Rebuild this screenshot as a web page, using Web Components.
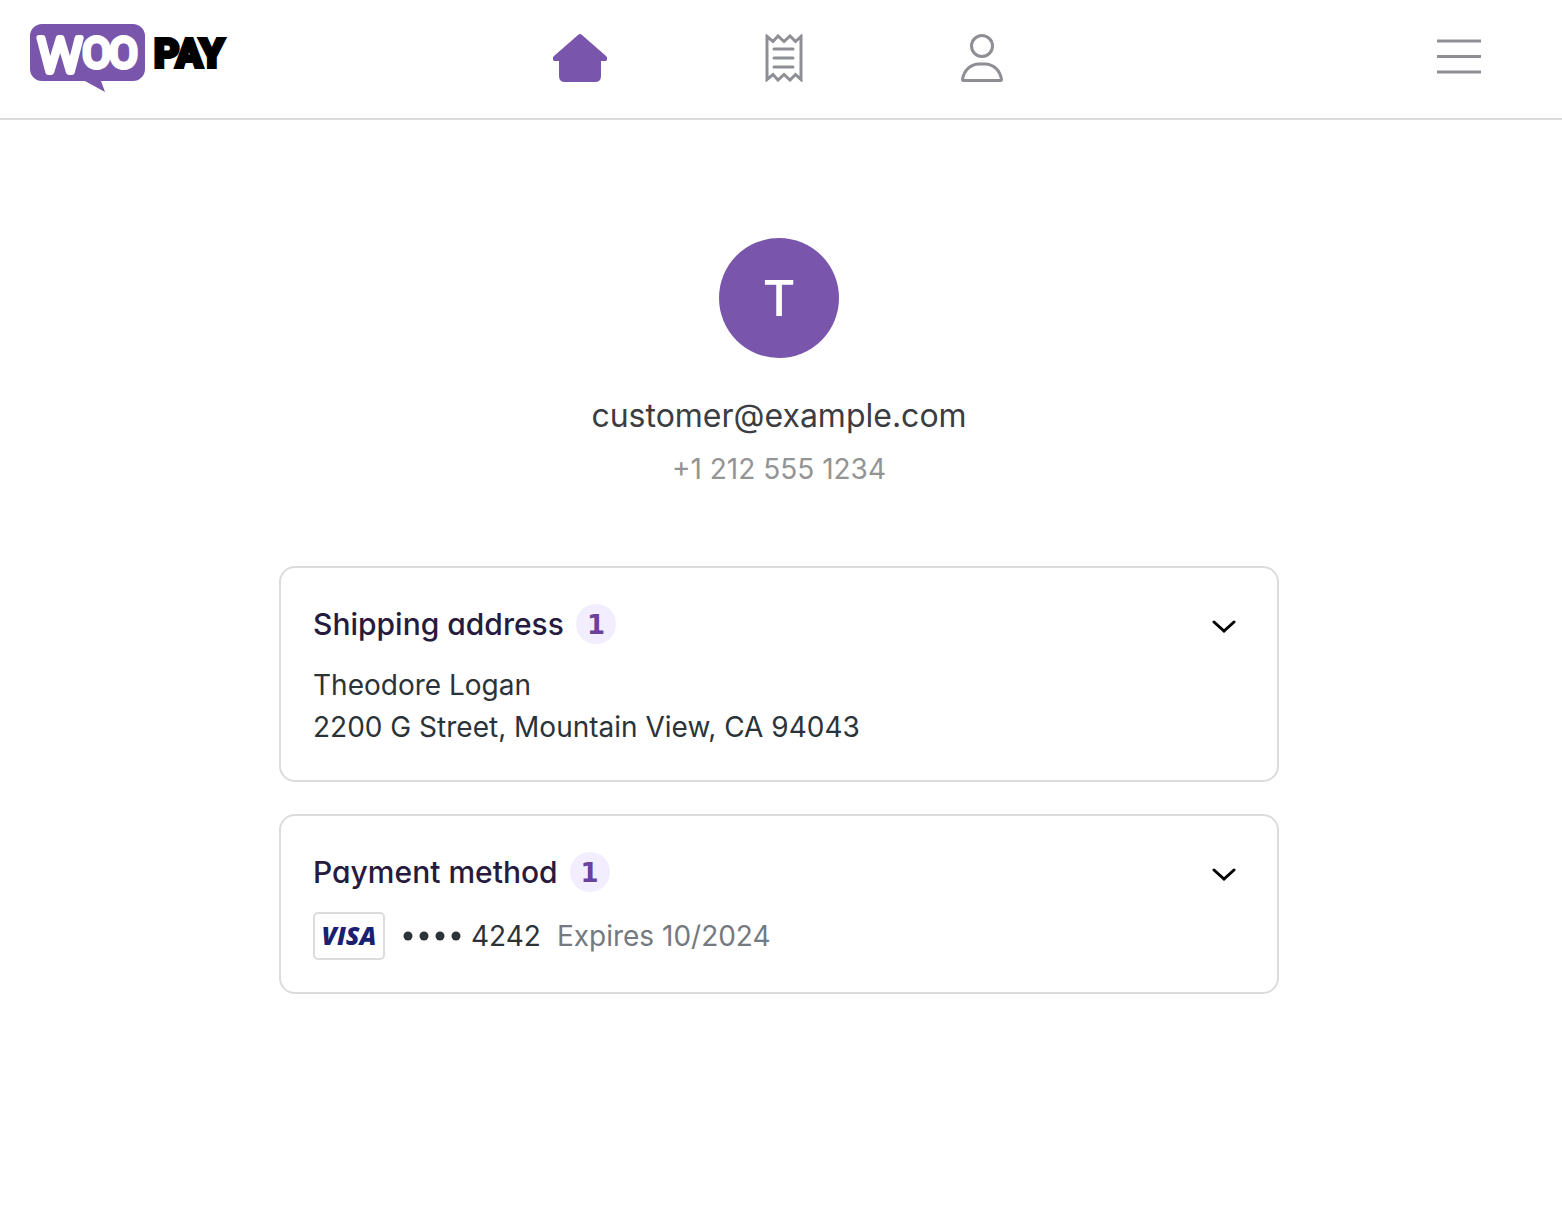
<!DOCTYPE html>
<html lang="en">
<head>
  <meta charset="utf-8">
  <meta name="viewport" content="width=device-width, initial-scale=1">
  <title>WooPay</title>
  <style>
    :root {
      --purple: #7956ab;
      --grey: #8e8f94;
      --border: #dcdcde;
    }

    body {
      margin: 0;
      background: #fff;
      color: #2c3338;
      font-family: Inter, "Liberation Sans", sans-serif;
      font-size: 28px;
      line-height: 42px;
      font-optical-sizing: none;
    }

    main {
      display: flex;
      flex-direction: column;
      gap: 32px;
      max-width: 1000px;
      margin: 0 auto;
      padding: 118px 32px 64px 28px;
    }
  </style>
</head>
<body>
  <woopay-header></woopay-header>
  <main>
    <customer-profile initial="T">
      <span slot="email">customer@example.com</span>
      <span slot="phone">+1 212 555 1234</span>
    </customer-profile>
    <account-card heading="Shipping address" count="1">
      <div>Theodore Logan</div>
      <div>2200 G Street, Mountain View, CA 94043</div>
    </account-card>
    <account-card heading="Payment method" count="1">
      <saved-card last4="4242" expires="10/2024"></saved-card>
    </account-card>
  </main>

  <script>
    class WooPayLogo extends HTMLElement {
      constructor() {
        super();
        this.attachShadow({ mode: 'open' });
      }

      connectedCallback() {
        this.shadowRoot.innerHTML = `
          <style>
            :host {
              display: block;
            }

            svg {
              display: block;
              overflow: visible;
            }

            text {
              font-family: Roboto, "Liberation Sans", sans-serif;
            }

            .woo {
              fill: #fff;
              stroke: #fff;
              stroke-width: 6;
              stroke-linejoin: round;
              font-weight: 300;
            }

            .pay {
              fill: #000;
              stroke: #000;
              stroke-width: 4;
              font-weight: 700;
            }
          </style>
          <svg width="200" height="68" viewBox="0 0 200 68" role="img" aria-label="WooPay">
            <path fill="#7956ab" d="M12 0h91a12 12 0 0 1 12 12v33a12 12 0 0 1-12 12H71l4 11-20-11H12A12 12 0 0 1 0 45V12A12 12 0 0 1 12 0z"/>
            <text class="woo" font-size="49" x="8" y="48">W</text>
            <text class="woo" font-size="40" x="53" y="43">OO</text>
            <text class="pay" font-size="39" x="124" y="43">PAY</text>
          </svg>
        `;
      }
    }

    class WooPayHeader extends HTMLElement {
      constructor() {
        super();
        this.attachShadow({ mode: 'open' });
      }

      connectedCallback() {
        this.shadowRoot.innerHTML = `
          <style>
            :host {
              display: block;
              border-bottom: 2px solid var(--border);
            }

            header {
              display: grid;
              grid-template-columns: 1fr auto 1fr;
              align-items: center;
              height: 118px;
              padding: 0 6px 2px 0;
              box-sizing: border-box;
            }

            .header__logo {
              justify-self: start;
              padding-left: 30px;
            }

            nav {
              display: flex;
              align-items: center;
              gap: 158px;
            }

            a, button {
              display: block;
              color: var(--grey);
            }

            a[aria-current] {
              color: var(--purple);
            }

            button {
              justify-self: end;
              margin: 0 75px 4px 0;
              padding: 0;
              border: 0;
              background: none;
              cursor: pointer;
            }

            svg {
              display: block;
              fill: none;
              stroke: currentColor;
              stroke-width: 3;
              stroke-linecap: round;
              stroke-linejoin: round;
            }
          </style>
          <header>
            <a class="header__logo" href="#"><woopay-logo></woopay-logo></a>
            <nav aria-label="Account">
              <a href="#home" aria-label="Home" aria-current="page">
                <svg width="54" height="48" viewBox="0 0 54 48">
                  <path fill="currentColor" stroke="none" d="M25 1q2-2 4 0l24 21q2 2 1 4-.5 1-2 1h-4v15q0 6-6 6H12q-6 0-6-6V27H2q-1.500 0-2-1-1-2 1-4z"/>
                </svg>
              </a>
              <a href="#orders" aria-label="Orders">
                <svg width="38" height="48" viewBox="0 0 38 48">
                  <path stroke-linecap="butt" stroke-linejoin="miter" d="M2 2.500L8 7.500l5-5.500 6 5.500L25 2l5.500 5.500L36 2.500v43l-5.500-5L25 46l-6-5.500-6 5.500-5-5.500-6 5z"/>
                  <path d="M9 15h19M9 24h19M9 33h19"/>
                </svg>
              </a>
              <a href="#profile" aria-label="Profile">
                <svg width="42" height="48" viewBox="0 0 42 48">
                  <circle cx="21" cy="12" r="10.500"/>
                  <path d="M2.500 46.500h37q1 0 1-1C39 36 32 30 24 30h-6C10 30 3 36 1.500 45.500q0 1 1 1z"/>
                </svg>
              </a>
            </nav>
            <button type="button" aria-label="Menu">
              <svg width="44" height="36" viewBox="0 0 44 36">
                <path stroke-linecap="butt" d="M0 3h44M0 18.500h44M0 34h44"/>
              </svg>
            </button>
          </header>
        `;
      }
    }

    class CustomerProfile extends HTMLElement {
      constructor() {
        super();
        this.attachShadow({ mode: 'open' });
      }

      connectedCallback() {
        this.shadowRoot.innerHTML = `
          <style>
            :host {
              display: flex;
              flex-direction: column;
              align-items: center;
              padding-bottom: 40px;
            }

            .profile__avatar {
              display: flex;
              align-items: center;
              justify-content: center;
              width: 120px;
              height: 120px;
              border-radius: 50%;
              background: var(--purple);
              color: #fff;
              font-size: 50px;
              font-weight: 500;
            }

            .profile__email {
              margin-top: 32px;
              color: #3c3d42;
              font-size: 32px;
              line-height: 52px;
            }

            .profile__phone {
              margin-top: 2px;
              color: #949494;
              line-height: 50px;
            }
          </style>
          <div class="profile__avatar">${this.getAttribute('initial')}</div>
          <div class="profile__email"><slot name="email"></slot></div>
          <div class="profile__phone"><slot name="phone"></slot></div>
        `;
      }
    }

    class AccountCard extends HTMLElement {
      constructor() {
        super();
        this.attachShadow({ mode: 'open' });
      }

      connectedCallback() {
        const heading = this.getAttribute('heading');

        this.shadowRoot.innerHTML = `
          <style>
            :host {
              display: block;
              padding: 36px 32px 32px;
              border: 2px solid var(--border);
              border-radius: 16px;
            }

            .card__header {
              display: flex;
              align-items: center;
              gap: 12px;
              margin-bottom: 20px;
            }

            h2 {
              margin: 0;
              color: #271b3d;
              font-size: 30px;
              font-weight: 500;
              line-height: 40px;
              font-feature-settings: "cv11";
            }

            .card__count {
              padding: 2px 11px 0;
              border-radius: 20px;
              background: #f2edff;
              color: #674399;
              font-family: "DejaVu Sans", sans-serif;
              font-size: 26px;
              font-weight: 700;
              line-height: 38px;
            }

            button {
              display: flex;
              align-items: center;
              justify-content: center;
              width: 42px;
              height: 40px;
              margin-left: auto;
              padding: 6px 0 0;
              border: 0;
              background: none;
              color: #000;
              cursor: pointer;
            }
          </style>
          <div class="card__header">
            <h2>${heading}</h2>
            <span class="card__count">${this.getAttribute('count')}</span>
            <button type="button" aria-label="Expand ${heading}">
              <svg width="24" height="14" viewBox="0 0 24 14" fill="none" stroke="currentColor" stroke-width="3" stroke-linecap="round">
                <path d="M2 2l10 9L22 2"/>
              </svg>
            </button>
          </div>
          <slot></slot>
        `;
      }
    }

    class SavedCard extends HTMLElement {
      constructor() {
        super();
        this.attachShadow({ mode: 'open' });
      }

      connectedCallback() {
        this.shadowRoot.innerHTML = `
          <style>
            :host {
              display: flex;
              align-items: center;
              height: 48px;
            }

            .brand {
              margin-right: 18px;
            }

            .dots {
              margin-right: 10px;
            }

            .expires {
              margin-left: 16px;
              color: #757980;
            }

            svg {
              display: block;
            }
          </style>
          <svg class="brand" width="72" height="48" viewBox="0 0 72 48" role="img" aria-label="Visa">
            <rect x="1" y="1" width="70" height="46" rx="4" fill="#fff" stroke="#dcdcde" stroke-width="2"/>
            <text x="36" y="33" text-anchor="middle" font-family="Open Sans, sans-serif" font-size="25" font-weight="800" font-style="italic" fill="#1a1f71">VISA</text>
          </svg>
          <svg class="dots" width="58" height="10" viewBox="0 0 58 10" fill="currentColor" aria-hidden="true">
            <circle cx="5" cy="5" r="4.500"/>
            <circle cx="21" cy="5" r="4.500"/>
            <circle cx="37" cy="5" r="4.500"/>
            <circle cx="53" cy="5" r="4.500"/>
          </svg>
          <span>${this.getAttribute('last4')}</span>
          <span class="expires">Expires ${this.getAttribute('expires')}</span>
        `;
      }
    }

    customElements.define('woopay-logo', WooPayLogo);
    customElements.define('woopay-header', WooPayHeader);
    customElements.define('customer-profile', CustomerProfile);
    customElements.define('account-card', AccountCard);
    customElements.define('saved-card', SavedCard);
  </script>
</body>
</html>
